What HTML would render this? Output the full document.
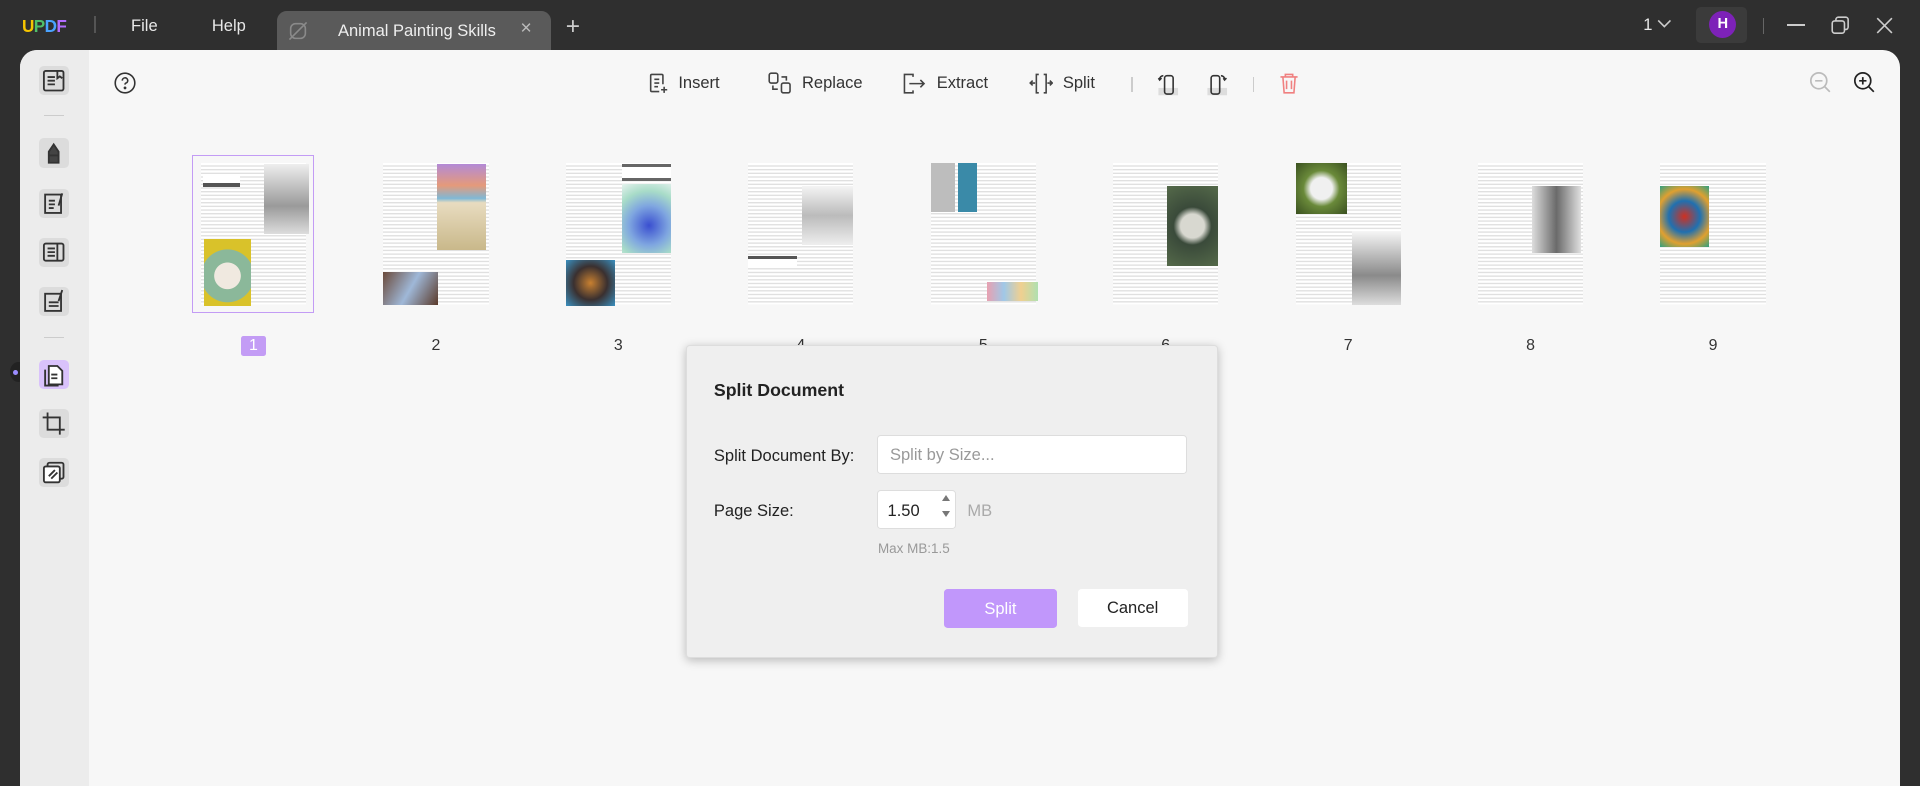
<!DOCTYPE html>
<html><head><meta charset="utf-8">
<style>
*{margin:0;padding:0;box-sizing:border-box}
html,body{width:1920px;height:786px;overflow:hidden;background:#2f2f2f}
#root{zoom:1.22449;position:relative;width:1568px;height:642px;font-family:"Liberation Sans",sans-serif;}
.abs{position:absolute}
.top{color:#e8e8e8;font-size:13.5px}
.panel{position:absolute;left:16px;top:41px;width:1536px;height:601px;background:#f7f7f7;border-radius:14px 14px 0 0;overflow:hidden}
.side{position:absolute;left:0;top:0;width:57px;height:100%;background:#ececec}
.sicon{position:absolute;left:16px;width:24px;height:24px;border-radius:4px;background:#dcdcdc}
.tool{position:absolute;top:18px;font-size:13.5px;color:#333;display:flex;align-items:center;gap:8px}
.pg{position:absolute;top:127px;width:98px;height:128px;background:#fff;
background-image:repeating-linear-gradient(#fff 0 2px,#e0e0e0 2px 3px);background-size:100% 3px;
background-clip:content-box;padding:6px}
.pg i{position:absolute;display:block}
.num{position:absolute;top:274px;width:20px;text-align:center;font-size:13px;color:#333;line-height:17px}
.dl{font-size:13.5px}
</style></head><body><div id="root">
<div class="abs" style="left:18px;top:13px;font-weight:bold;font-size:14px;letter-spacing:-0.5px"><span style="color:#f6c500">U</span><span style="color:#4fbf6a">P</span><span style="color:#4aa3ff">D</span><span style="color:#b36cff">F</span></div>
<div class="abs" style="left:77px;top:13px;width:1px;height:14px;background:#555"></div>
<div class="abs top" style="left:107px;top:13px">File</div>
<div class="abs top" style="left:173px;top:13px">Help</div>
<div class="abs" style="left:226px;top:9px;width:224px;height:32px;background:#5a5a5a;border-radius:8px 8px 0 0"></div>
<svg class="abs" style="left:234px;top:16px" width="18" height="18" viewBox="0 0 18 18" fill="none" stroke="#8a8a8a" stroke-width="1.3"><rect x="3" y="3" width="12" height="12" rx="4"/><path d="M2 16L16 2"/></svg>
<div class="abs top" style="left:276px;top:17px;color:#eee">Animal Painting Skills</div>
<div class="abs" style="left:425px;top:14px;color:#bbb;font-size:16px">×</div>
<div class="abs" style="left:462px;top:11px;color:#ccc;font-size:20px;font-weight:300">+</div>
<div class="abs top" style="left:1342px;top:12px">1</div>
<svg class="abs" style="left:1353px;top:15px" width="12" height="10"><path d="M1 2l5 5 5-5" stroke="#ccc" fill="none" stroke-width="1.3"/></svg>
<div class="abs" style="left:1385px;top:6px;width:42px;height:29px;background:#3b3b3b;border-radius:4px"></div>
<div class="abs" style="left:1396px;top:9px;width:22px;height:22px;border-radius:50%;background:#7d22b8;color:#fff;font-weight:bold;font-size:12px;text-align:center;line-height:22px">H</div>
<div class="abs" style="left:1440px;top:15px;width:1px;height:13px;background:#666"></div>
<div class="abs" style="left:1459px;top:20px;width:15px;height:1.3px;background:#ccc"></div>
<svg class="abs" style="left:1495px;top:13px" width="16" height="16" fill="none" stroke="#ccc" stroke-width="1.3"><rect x="1" y="4" width="10" height="10" rx="2"/><path d="M4 4V3a2 2 0 0 1 2-2h6a2 2 0 0 1 2 2v6a2 2 0 0 1-2 2h-1"/></svg>
<svg class="abs" style="left:1532px;top:14px" width="14" height="14" stroke="#ccc" stroke-width="1.3"><path d="M1 1l12 12M13 1L1 13"/></svg>
<div class="abs" style="left:8px;top:296px;width:14px;height:16px;border-radius:50%;background:#222"></div>
<div class="abs" style="left:11px;top:302px;width:4px;height:4px;border-radius:50%;background:#9b8cff"></div>
<div class="panel">
 <div class="side">
  <div class="sicon" style="top:13px"></div>
  <div class="abs" style="left:20px;top:53px;width:16px;height:1px;background:#ccc"></div>
  <div class="sicon" style="top:72px"></div>
  <div class="sicon" style="top:113px"></div>
  <div class="sicon" style="top:153px"></div>
  <div class="sicon" style="top:193px"></div>
  <div class="abs" style="left:20px;top:234px;width:16px;height:1px;background:#ccc"></div>
  <div class="sicon" style="top:253px;background:#d9c2fb"></div>
  <div class="sicon" style="top:293px"></div>
  <div class="sicon" style="top:333px"></div>
  <svg class="abs" style="left:16px;top:13px" width="24" height="480" fill="none" stroke="#333" stroke-width="1.5">
   <rect x="4" y="4" width="16" height="16" rx="1.5"/><path d="M7 9h6M7 12h6M7 15h6M15 4v6l2-1.5 2 1.5"/>
   <g transform="translate(0,59)"><path d="M8 20V11l4-6 4 6v9z" fill="#444"/><path d="M8 14h8"/></g>
   <g transform="translate(0,100)"><rect x="5" y="5" width="13" height="15"/><path d="M8 10h5M8 13h5M8 16h4M16 14l3-10"/></g>
   <g transform="translate(0,140)"><rect x="4" y="5" width="16" height="14" rx="1.5"/><path d="M7 9h6M7 12h6M7 15h6M15 5v14"/></g>
   <g transform="translate(0,180)"><rect x="5" y="6" width="13" height="14"/><path d="M8 13h8M8 16h8M16 12l3-9"/></g>
   <g transform="translate(0,240)"><path d="M8 5h7l4 4v11H8z" fill="#fff"/><path d="M5 8v13h11M10 12h5M10 15h5"/></g>
   <g transform="translate(0,280)"><path d="M7 3v14h14M3 7h14v14"/></g>
   <g transform="translate(0,320)"><rect x="7" y="4" width="13" height="13" rx="1.5"/><rect x="4" y="7" width="13" height="13" rx="1.5" fill="#fff"/><path d="M8 15l5-5M10 17l5-5"/></g>
  </svg>
 </div>
 <svg class="abs" style="left:77px;top:18px" width="18" height="18" fill="none" stroke="#333" stroke-width="1.3"><circle cx="9" cy="9" r="8"/><path d="M6.8 7a2.2 2.2 0 1 1 2.8 2.1c-.5.2-.6.6-.6 1.2"/><circle cx="9" cy="13" r=".5" fill="#333"/></svg>
 <div class="tool" style="left:512px"><svg width="18" height="18" fill="none" stroke="#444" stroke-width="1.3"><path d="M13 10V3a1 1 0 0 0-1-1H4a1 1 0 0 0-1 1v12a1 1 0 0 0 1 1h6M6 6h4M6 9h4M6 12h3M14 12v5M11.5 14.5h5"/></svg>Insert</div>
 <div class="tool" style="left:611px"><svg width="20" height="18" fill="none" stroke="#444" stroke-width="1.3"><rect x="1" y="1" width="7" height="8" rx="1.5"/><rect x="11" y="9" width="7" height="8" rx="1.5"/><path d="M11 4h4v3M8 14H4v-3"/></svg>Replace</div>
 <div class="tool" style="left:721px"><svg width="20" height="18" fill="none" stroke="#444" stroke-width="1.3"><path d="M9 4V2H2v15h7v-2M6 9.5h12M15 6.5l3 3-3 3"/></svg>Extract</div>
 <div class="tool" style="left:824px"><svg width="20" height="18" fill="none" stroke="#444" stroke-width="1.3"><path d="M8 2H6v15h2M12 2h2v15h-2M1 9h4M15 9h4M3 7l-2 2 2 2M17 7l2 2-2 2"/></svg>Split</div>
 <div class="abs" style="left:908px;top:22px;width:1px;height:12px;background:#ccc"></div>
 <svg class="abs" style="left:928px;top:18px" width="20" height="20" fill="none" stroke="#333" stroke-width="1.3"><rect x="2" y="13" width="16" height="6" fill="#ddd" stroke="none"/><rect x="7" y="3" width="7" height="15" rx="2"/><path d="M3 6a3 3 0 0 1 3-3M2 5l1 1.5L4.5 5"/></svg>
 <svg class="abs" style="left:968px;top:18px" width="20" height="20" fill="none" stroke="#333" stroke-width="1.3"><rect x="2" y="13" width="16" height="6" fill="#ddd" stroke="none"/><rect x="5" y="3" width="7" height="15" rx="2"/><path d="M16 6a3 3 0 0 0-3-3M17.5 5L16 6.5 15 5"/></svg>
 <div class="abs" style="left:1007px;top:22px;width:1px;height:12px;background:#ccc"></div>
 <svg class="abs" style="left:1028px;top:18px" width="18" height="19" fill="none" stroke="#f08080" stroke-width="1.3"><path d="M2 4h14M6 4V2h6v2M4 4l1 13h8l1-13M7 7v7M11 7v7"/></svg>
 <svg class="abs" style="left:1461px;top:17px" width="20" height="20" fill="none" stroke="#bbb" stroke-width="1.4"><circle cx="8" cy="8" r="6.5"/><path d="M5 8h6M13 13l4 4"/></svg>
 <svg class="abs" style="left:1497px;top:17px" width="20" height="20" fill="none" stroke="#222" stroke-width="1.4"><circle cx="8" cy="8" r="6.5"/><path d="M5 8h6M8 5v6M13 13l4 4"/></svg>
</div>
<div class="pg" style="left:158px;outline:1.5px solid #c39cf5"><i style="left:58px;top:7px;width:36px;height:57px;background:linear-gradient(#eee,#9a9a9a 60%,#ddd)"></i><i style="left:9px;top:68px;width:38px;height:55px;background:radial-gradient(circle at 50% 55%,#f0e9e0 0 30%,#8bb89a 31% 60%,#d9c22a 61%)"></i><i style="left:8px;top:16px;width:30px;height:10px;background:#fff;border-bottom:4px solid #555"></i></div>
<div class="pg" style="left:307px"><i style="left:50px;top:7px;width:40px;height:70px;background:linear-gradient(#b38ad6,#e59a7a 25%,#7fb8d6 40%,#e8dcc0 45%,#c9b88a)"></i><i style="left:6px;top:95px;width:45px;height:27px;background:linear-gradient(120deg,#6b4a3a,#9fb8d8,#5a3a2a)"></i></div>
<div class="pg" style="left:456px"><i style="left:52px;top:7px;width:40px;height:14px;background:#fff;border-top:3px solid #666;border-bottom:3px solid #666"></i><i style="left:52px;top:23px;width:40px;height:57px;background:radial-gradient(circle at 55% 60%,#3a4fd0,#7fa6e0 40%,#a8dcc8 70%,#e6f2ee)"></i><i style="left:6px;top:85px;width:40px;height:38px;background:radial-gradient(circle,#c88030,#3a3030 50%,#3a90c0)"></i></div>
<div class="pg" style="left:605px"><i style="left:50px;top:25px;width:42px;height:48px;background:linear-gradient(#f4f4f4,#bbb 50%,#eee)"></i><i style="left:6px;top:82px;width:40px;height:10px;background:#fff;border-top:3px solid #555"></i></div>
<div class="pg" style="left:754px"><i style="left:6px;top:6px;width:20px;height:40px;background:#bdbdbd"></i><i style="left:28px;top:6px;width:16px;height:40px;background:#3a8aa8"></i><i style="left:52px;top:103px;width:42px;height:16px;background:linear-gradient(90deg,#e8a0b0,#a0c8e8,#f0d090,#b0e0b0)"></i></div>
<div class="pg" style="left:903px"><i style="left:50px;top:25px;width:42px;height:65px;background:radial-gradient(circle,#d8d8d0 0 25%,#3a4a3a 40%,#556a4a)"></i></div>
<div class="pg" style="left:1052px"><i style="left:6px;top:6px;width:42px;height:42px;background:radial-gradient(circle,#f0f0f0 0 30%,#6a8a3a 50%,#3a5020)"></i><i style="left:52px;top:62px;width:40px;height:60px;background:linear-gradient(#f6f6f6,#8a8a8a 60%,#ddd)"></i></div>
<div class="pg" style="left:1201px"><i style="left:50px;top:25px;width:40px;height:55px;background:linear-gradient(90deg,#ddd,#6a6a6a,#e0e0e0)"></i></div>
<div class="pg" style="left:1350px"><i style="left:6px;top:25px;width:40px;height:50px;background:radial-gradient(circle,#d03020,#2070b0 40%,#e0a030 70%,#30a080)"></i></div>
<div class="num" style="left:197px;background:#c39cf5;color:#fff;border-radius:2px">1</div>
<div class="num" style="left:346px">2</div><div class="num" style="left:495px">3</div><div class="num" style="left:644px">4</div><div class="num" style="left:793px">5</div><div class="num" style="left:942px">6</div><div class="num" style="left:1091px">7</div><div class="num" style="left:1240px">8</div><div class="num" style="left:1389px">9</div>
<div class="abs" style="left:560px;top:282px;width:435px;height:255px;background:#efefef;border:1px solid #ddd;border-radius:3px;box-shadow:0 2px 8px rgba(0,0,0,.25)"></div>
<div class="abs" style="left:583px;top:310px;font-weight:bold;font-size:14.5px;color:#222">Split Document</div>
<div class="abs dl" style="left:583px;top:364px;color:#222">Split Document By:</div>
<div class="abs dl" style="left:716px;top:355px;width:253px;height:32px;background:#fff;border:1px solid #ddd;border-radius:3px;color:#999;padding:8px 10px">Split by Size...</div>
<div class="abs dl" style="left:583px;top:409px;color:#222">Page Size:</div>
<div class="abs dl" style="left:716px;top:400px;width:65px;height:32px;background:#fff;border:1px solid #ddd;border-radius:3px;color:#222;padding:8px 8px">1.50</div>
<div class="abs" style="left:769px;top:404px;width:0;height:0;border:4px solid transparent;border-bottom:5px solid #777;border-top:0"></div>
<div class="abs" style="left:769px;top:417px;width:0;height:0;border:4px solid transparent;border-top:5px solid #777;border-bottom:0"></div>
<div class="abs dl" style="left:790px;top:409px;color:#aaa">MB</div>
<div class="abs" style="left:717px;top:442px;font-size:11px;color:#999">Max MB:1.5</div>
<div class="abs dl" style="left:771px;top:481px;width:92px;height:32px;background:#c197fb;border-radius:3px;color:#fff;text-align:center;line-height:32px">Split</div>
<div class="abs dl" style="left:880px;top:481px;width:90px;height:31px;background:#fff;border-radius:3px;color:#222;text-align:center;line-height:31px">Cancel</div>
</div></body></html>
